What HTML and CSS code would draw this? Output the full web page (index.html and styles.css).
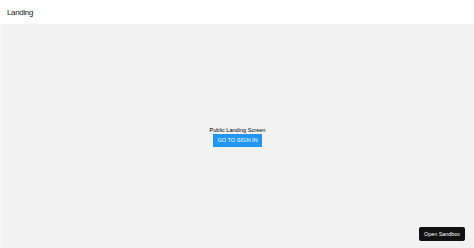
FILE: index.html
```html
<!DOCTYPE html>
<html>
<head>
<meta charset="utf-8">
<link rel="stylesheet" href="styles.css">
</head>
<body>
<div class="app">
  <header class="header"><span class="title">Landing</span></header>
  <main class="main">
    <div class="center">
      <div class="label">Public Landing Screen</div>
      <button class="signin">GO TO SIGN IN</button>
    </div>
  </main>
  <button class="sandbox">Open Sandbox</button>
</div>
</body>
</html>
```
FILE: styles.css
```css
html, body { margin: 0; padding: 0; }
body { font-family: "Liberation Sans", Arial, sans-serif; background: #fff; }
.app { width: 474px; height: 248px; display: flex; flex-direction: column; position: relative; }
.header { height: 24px; display: flex; align-items: center; padding-left: 7px; background: #fff; }
.title { font-size: 8px; letter-spacing: -0.35px; color: #1a1a1a; }
.main { flex: 1; background: #f2f2f2; border-left: 1px solid #f8f8f8; display: flex; align-items: center; justify-content: center; }
.center { display: flex; flex-direction: column; align-items: center; margin-top: 1px; }
.label { font-size: 5.6px; color: #000; line-height: 7px; }
.signin { margin-top: 0; background: #2196f3; color: #fff; border: none; font-family: "Liberation Sans", Arial, sans-serif; font-size: 5.6px; white-space: nowrap; height: 13px; padding: 0 4px; }
.sandbox { position: absolute; right: 9px; bottom: 7px; background: #111; color: #fff; border: none; border-radius: 2px; font-family: "Liberation Sans", Arial, sans-serif; font-size: 5.4px; white-space: nowrap; height: 14px; padding: 0 5px; }
```
